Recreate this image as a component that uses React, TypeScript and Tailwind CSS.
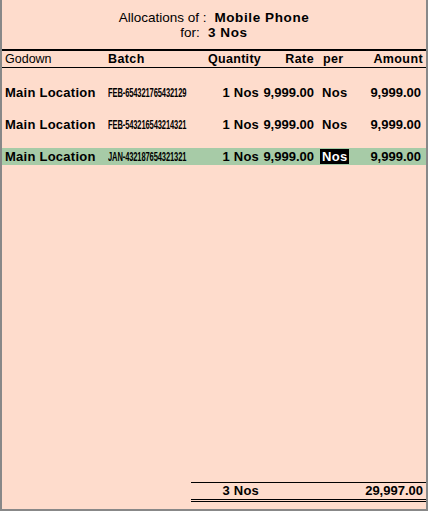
import React from "react";

const rows = [
  { godown: "Main Location", batch: "FEB-654321765432129", qty: "1 Nos", rate: "9,999.00", per: "Nos", amount: "9,999.00", active: false },
  { godown: "Main Location", batch: "FEB-543216543214321", qty: "1 Nos", rate: "9,999.00", per: "Nos", amount: "9,999.00", active: false },
  { godown: "Main Location", batch: "JAN-432187654321321", qty: "1 Nos", rate: "9,999.00", per: "Nos", amount: "9,999.00", active: true },
];

export default function App() {
  return (
    <div
      className="w-[428px] h-[511px] bg-[#fedccc] border-l-2 border-r-2 border-b-2 border-[#888888] flex flex-col text-black"
      style={{ fontFamily: '"Liberation Sans", Arial, sans-serif' }}
    >
      {/* Title */}
      <div className="pt-[10px] flex flex-col items-center text-[13.5px] leading-[15px]">
        <div className="whitespace-nowrap">
          <span>Allocations of :</span>
          <span className="font-bold tracking-[0.6px] ml-[8px]">Mobile Phone</span>
        </div>
        <div className="whitespace-nowrap">
          <span>for:</span>
          <span className="font-bold tracking-[0.6px] ml-[8px]">3 Nos</span>
        </div>
      </div>

      <div className="mt-[9px] h-[2px] bg-black" />

      {/* Header */}
      <div className="flex h-[16px] items-center text-[12.5px] leading-[16px]">
        <div className="w-[106px] shrink-0 pl-[3px]">Godown</div>
        <div className="w-[100px] shrink-0 font-bold tracking-[0.4px]">Batch</div>
        <div className="w-[51px] shrink-0 text-right font-bold tracking-[0.3px]">Quantity</div>
        <div className="w-[55px] shrink-0 text-right font-bold tracking-[0.4px]">Rate</div>
        <div className="w-[41px] shrink-0 pl-[9px] font-bold tracking-[0.3px]">per</div>
        <div className="flex-1 text-right pr-[3px] font-bold tracking-[0.4px]">Amount</div>
      </div>
      <div className="h-[1px] bg-black" />

      {/* Rows */}
      <div className="mt-[16px] flex flex-col gap-[15px]">
        {rows.map((r, i) => (
          <div
            key={i}
            className={`flex h-[17px] items-center text-[13px] font-bold leading-[17px] ${r.active ? "bg-[#a7cba7]" : ""}`}
          >
            <div className="w-[106px] shrink-0 pl-[3px] tracking-[0.25px] whitespace-nowrap">{r.godown}</div>
            <div className="w-[100px] shrink-0 whitespace-nowrap overflow-visible">
              <span className="inline-block origin-left scale-x-[0.58] tracking-[-0.2px]">{r.batch}</span>
            </div>
            <div className="w-[51px] shrink-0 text-right tracking-[0.2px] whitespace-nowrap">{r.qty}</div>
            <div className="w-[55px] shrink-0 text-right whitespace-nowrap">{r.rate}</div>
            <div className="w-[41px] shrink-0 pl-[8px] flex items-center">
              <span
                className={`tracking-[0.3px] leading-[15px] ${r.active ? "bg-black text-white px-[2px] -ml-[2px]" : ""}`}
              >
                {r.per}
              </span>
            </div>
            <div className="flex-1 text-right pr-[5px] whitespace-nowrap">{r.amount}</div>
          </div>
        ))}
      </div>

      <div className="flex-1" />

      {/* Footer */}
      <div className="ml-[189px] mb-[7px] flex flex-col">
        <div className="h-[1px] bg-black" />
        <div className="flex h-[16px] items-center text-[13px] font-bold leading-[16px]">
          <div className="w-[68px] shrink-0 text-right tracking-[0.2px]">3 Nos</div>
          <div className="flex-1 text-right pr-[3px]">29,997.00</div>
        </div>
        <div className="h-[1px] bg-black" />
        <div className="h-[1px]" />
        <div className="h-[1px] bg-black" />
      </div>
    </div>
  );
}
